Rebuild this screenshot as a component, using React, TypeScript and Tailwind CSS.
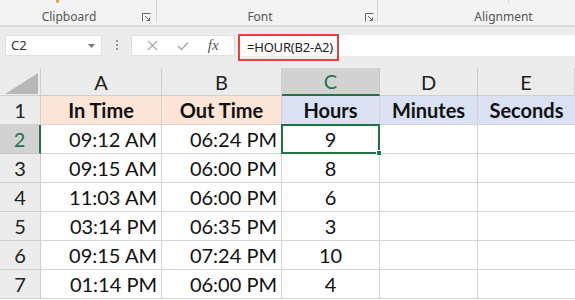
import React from "react";

const rows = [
  ["09:12 AM", "06:24 PM", "9"],
  ["09:15 AM", "06:00 PM", "8"],
  ["11:03 AM", "06:00 PM", "6"],
  ["03:14 PM", "06:35 PM", "3"],
  ["09:15 AM", "07:24 PM", "10"],
  ["01:14 PM", "06:00 PM", "4"],
];

function Launcher() {
  return (
    <svg width="9" height="9" viewBox="0 0 9 9" className="text-[#666]">
      <path d="M0.5 8.5V0.5H8.5" fill="none" stroke="currentColor" strokeWidth="1" />
      <path d="M3 3L7.5 7.5M7.5 4.5V7.5H4.5" fill="none" stroke="currentColor" strokeWidth="1" />
    </svg>
  );
}

export default function App() {
  const font = { fontFamily: "Lato, 'Open Sans', sans-serif" };
  return (
    <div className="w-[575px] h-[300px] overflow-hidden bg-white relative" style={{ fontFamily: "'Noto Sans', 'Open Sans', sans-serif" }}>
      {/* Ribbon */}
      <div className="h-[25px] bg-[#f3f3f3] flex text-[12px] leading-[14px] text-[#555] relative">
        <div className="w-[156px] relative flex items-end justify-center pb-[1px]">
          <span className="pr-[18px]">Clipboard</span>
          <div className="absolute left-[56px] top-0 w-[3px] h-[3px] bg-[#e8a040] rounded-b" />
          <div className="absolute right-[5px] bottom-[3px]"><Launcher /></div>
        </div>
        <div className="w-px h-[22px] bg-[#d6d6d6]" />
        <div className="w-[220px] relative flex items-end justify-center pb-[1px]">
          <span className="pr-[14px]">Font</span>
          <div className="absolute right-[3px] bottom-[3px]"><Launcher /></div>
        </div>
        <div className="w-px h-[22px] bg-[#d6d6d6]" />
        <div className="flex-1 relative flex items-end justify-center pb-[1px]">
          <span className="pl-[54px]">Alignment</span>
          <div className="absolute right-[66px] top-0 w-px h-[3px] bg-[#d6d6d6]" />
        </div>
      </div>
      <div className="h-[2px] bg-[#dadada]" />
      {/* Formula bar */}
      <div className="h-[41px] bg-[#ececec] flex items-start pt-[8px] relative">
        <div className="ml-[5px] w-[97px] h-[21px] bg-white border border-[#e0e0e0] flex items-center justify-between pl-[5px] pr-[6px] text-[13px] text-[#333]">
          <span>C2</span>
          <svg width="7" height="4" viewBox="0 0 7 4"><path d="M0 0H7L3.5 4Z" fill="#777" /></svg>
        </div>
        <div className="w-[29px] flex flex-col items-center gap-[2px] pt-[5px]">
          <div className="w-[2px] h-[2px] bg-[#999]" />
          <div className="w-[2px] h-[2px] bg-[#999]" />
          <div className="w-[2px] h-[2px] bg-[#999]" />
        </div>
        <div className="w-[104px] h-[21px] bg-white border border-[#e0e0e0] flex items-center justify-around px-[6px]">
          <svg width="11" height="11" viewBox="0 0 11 11"><path d="M1 1L10 10M10 1L1 10" stroke="#aaa" strokeWidth="1.3" /></svg>
          <svg width="12" height="10" viewBox="0 0 12 10"><path d="M1 5L4.5 8.5L11 1.5" fill="none" stroke="#aaa" strokeWidth="1.5" /></svg>
          <span className="text-[15px] text-[#555] italic" style={{ fontFamily: "'Liberation Serif', serif" }}>fx</span>
        </div>
        <div className="ml-[3px] flex-1 h-[21px] bg-white" />
        <div className="absolute left-[238px] top-[7px] w-[101px] h-[27px] border-2 border-[#e8403c] flex items-center pl-[7px] text-[13px] tracking-[-0.2px] whitespace-nowrap text-[#222]">
          =HOUR(B2-A2)
        </div>
      </div>
      {/* Grid */}
      <div className="grid grid-cols-[41px_121px_120px_98px_98px_97px] grid-rows-[28px_repeat(7,29px)]" style={font}>
        {/* header row */}
        <div className="bg-[#ececec] border-r border-b border-[#d0d0d0] relative">
          <svg className="absolute left-[5px] top-[5px]" width="33" height="21" viewBox="0 0 33 21"><path d="M33 0V21H0Z" fill="#b8b8b8" /></svg>
        </div>
        {["A", "B", "C", "D", "E"].map((c) => (
          <div
            key={c}
            className={
              c === "C"
                ? "bg-[#d2d2d2] border-r border-[#c6c6c6] border-b-2 border-b-[#217346] flex items-center justify-center text-[20px] text-[#217346]"
                : "bg-[#ececec] border-r border-b border-[#d0d0d0] flex items-center justify-center text-[20px] text-[#222]"
            }
          >
            {c}
          </div>
        ))}
        {/* row 1 */}
        <div className="bg-[#ececec] border-r border-b border-[#d0d0d0] flex items-center justify-center text-[20px] text-[#222]">1</div>
        <div className="bg-[#fce4d6] border-r border-b border-[#d4d4d4] flex items-center justify-center text-[20px] font-bold text-[#111]">In Time</div>
        <div className="bg-[#fce4d6] border-r border-b border-[#d4d4d4] flex items-center justify-center text-[20px] font-bold text-[#111]">Out Time</div>
        <div className="bg-[#d9e1f2] border-r border-b border-[#d4d4d4] flex items-center justify-center text-[20px] font-bold text-[#111]">Hours</div>
        <div className="bg-[#d9e1f2] border-r border-b border-[#d4d4d4] flex items-center justify-center text-[20px] font-bold text-[#111]">Minutes</div>
        <div className="bg-[#d9e1f2] border-b border-[#d4d4d4] flex items-center justify-center text-[20px] font-bold text-[#111]">Seconds</div>
        {rows.map((r, i) => (
          <React.Fragment key={i}>
            <div
              className={
                i === 0
                  ? "bg-[#d2d2d2] border-r-2 border-r-[#217346] border-b border-[#c6c6c6] flex items-center justify-center text-[20px] text-[#217346]"
                  : "bg-[#ececec] border-r border-b border-[#d0d0d0] flex items-center justify-center text-[20px] text-[#222]"
              }
            >
              {i + 2}
            </div>
            <div className="border-r border-b border-[#d4d4d4] flex items-center justify-end pr-[4px] text-[20px] text-[#111]">{r[0]}</div>
            <div className="border-r border-b border-[#d4d4d4] flex items-center justify-end pr-[4px] text-[20px] text-[#111]">{r[1]}</div>
            <div
              className={
                i === 0
                  ? "relative border-2 border-[#217346] -mt-px -ml-px flex items-center justify-center text-[20px] text-[#111]"
                  : "border-r border-b border-[#d4d4d4] flex items-center justify-center text-[20px] text-[#111]"
              }
            >
              {r[2]}
              {i === 0 && <div className="absolute -right-[4px] -bottom-[4px] w-[6px] h-[6px] bg-[#217346] border border-white" />}
            </div>
            <div className="border-r border-b border-[#d4d4d4]" />
            <div className="border-b border-[#d4d4d4]" />
          </React.Fragment>
        ))}
      </div>
    </div>
  );
}
